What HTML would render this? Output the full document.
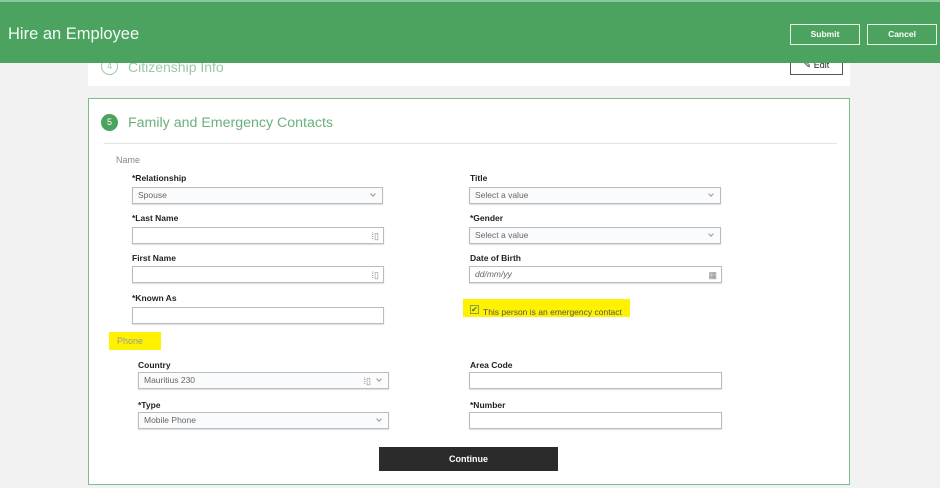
<!DOCTYPE html>
<html><head><meta charset="utf-8"><style>
*{box-sizing:border-box;margin:0;padding:0}
body{width:940px;height:488px;background:#f2f2f2;font-family:"Liberation Sans",sans-serif;position:relative;overflow:hidden}
.a{position:absolute}
.hdr{left:0;top:0;width:940px;height:63px;background:#4ca25f;border-top:2px solid #8cc79a}
.hdr .t{left:8px;top:23px;color:#f4fbf5;font-size:16.5px}
.btn{top:22px;height:21px;border:1px solid #e6f3e9;color:#fff;font-size:8.5px;text-align:center;line-height:19px;font-weight:bold}
.card{background:#fff}
.lbl{font-size:8.5px;font-weight:bold;color:#222}
.in{height:17px;border:1px solid #bbb;background:#fff;font-size:8.5px;color:#666;padding-left:5px;line-height:15px;box-shadow:0 1px 1px #ddd}
.in.sel{background:#fafbfd}
.chev{position:absolute;right:7px;top:4px;width:4px;height:4px;border-right:1px solid #999;border-bottom:1px solid #999;transform:rotate(45deg)}
.ic{position:absolute;right:4px;top:1px;font-size:9px;color:#888}
</style></head><body>
<div class="a card" style="left:88px;top:50px;width:762px;height:36px"></div>
<div class="a" style="left:101px;top:58px;width:17px;height:17px;border:1px solid #9cc9a6;border-radius:50%;font-size:9px;color:#9cc9a6;text-align:center;line-height:15px">4</div>
<div class="a" style="left:128px;top:59px;font-size:14px;color:#9cc9a6">Citizenship Info</div>
<div class="a" style="left:790px;top:56px;width:53px;height:19px;border:1px solid #555;background:#fff;font-size:9px;line-height:17px;text-align:center;color:#222">✎ Edit</div>
<div class="a hdr"><div class="a t">Hire an Employee</div>
<div class="a btn" style="left:790px;width:70px">Submit</div>
<div class="a btn" style="left:867px;width:70px">Cancel</div></div>

<div class="a card" style="left:88px;top:98px;width:762px;height:387px;border:1px solid #7bbf8a"></div>
<div class="a" style="left:101px;top:114px;width:17px;height:17px;background:#4ca25f;border-radius:50%;font-size:9px;color:#fff;text-align:center;line-height:17px">5</div>
<div class="a" style="left:128px;top:115px;font-size:14.2px;color:#6bb07b">Family and Emergency Contacts</div>
<div class="a" style="left:104px;top:143px;width:733px;height:1px;background:#e4e4e4"></div>
<div class="a" style="left:116px;top:155px;font-size:9px;color:#888">Name</div>

<div class="a lbl" style="left:132px;top:173px">*Relationship</div>
<div class="a in sel" style="left:132px;top:187px;width:251px">Spouse<span class="chev"></span></div>
<div class="a lbl" style="left:132px;top:213px">*Last Name</div>
<div class="a in" style="left:132px;top:227px;width:252px"><span class="ic">⁞▯</span></div>
<div class="a lbl" style="left:132px;top:253px">First Name</div>
<div class="a in" style="left:132px;top:266px;width:252px"><span class="ic">⁞▯</span></div>
<div class="a lbl" style="left:132px;top:293px">*Known As</div>
<div class="a in" style="left:132px;top:307px;width:252px"></div>

<div class="a lbl" style="left:470px;top:173px">Title</div>
<div class="a in sel" style="left:469px;top:187px;width:252px">Select a value<span class="chev"></span></div>
<div class="a lbl" style="left:470px;top:213px">*Gender</div>
<div class="a in sel" style="left:469px;top:227px;width:252px">Select a value<span class="chev"></span></div>
<div class="a lbl" style="left:470px;top:253px">Date of Birth</div>
<div class="a in" style="left:469px;top:266px;width:253px;font-style:italic">dd/mm/yy<span class="ic" style="font-style:normal">▦</span></div>

<div class="a" style="left:463px;top:299px;width:167px;height:18px;background:#fff200"></div>
<div class="a" style="left:470px;top:305px;width:9px;height:9px;border:1px solid #9a9a40;font-size:8px;color:#2e8b3a;line-height:7px;text-align:center">✔</div>
<div class="a" style="left:483px;top:307px;font-size:8.5px;color:#555">This person is an emergency contact</div>

<div class="a" style="left:109px;top:332px;width:52px;height:18px;background:#fff200"></div>
<div class="a" style="left:117px;top:336px;font-size:9px;color:#999">Phone</div>

<div class="a lbl" style="left:138px;top:360px">Country</div>
<div class="a in sel" style="left:138px;top:372px;width:251px">Mauritius 230<span class="ic" style="right:17px">⁞▯</span><span class="chev"></span></div>
<div class="a lbl" style="left:138px;top:400px">*Type</div>
<div class="a in sel" style="left:138px;top:412px;width:251px">Mobile Phone<span class="chev"></span></div>
<div class="a lbl" style="left:470px;top:360px">Area Code</div>
<div class="a in" style="left:469px;top:372px;width:253px"></div>
<div class="a lbl" style="left:470px;top:400px">*Number</div>
<div class="a in" style="left:469px;top:412px;width:253px"></div>

<div class="a" style="left:379px;top:447px;width:179px;height:24px;background:#2b2b2b;color:#fff;font-size:9px;font-weight:bold;text-align:center;line-height:24px">Continue</div>
</body></html>
